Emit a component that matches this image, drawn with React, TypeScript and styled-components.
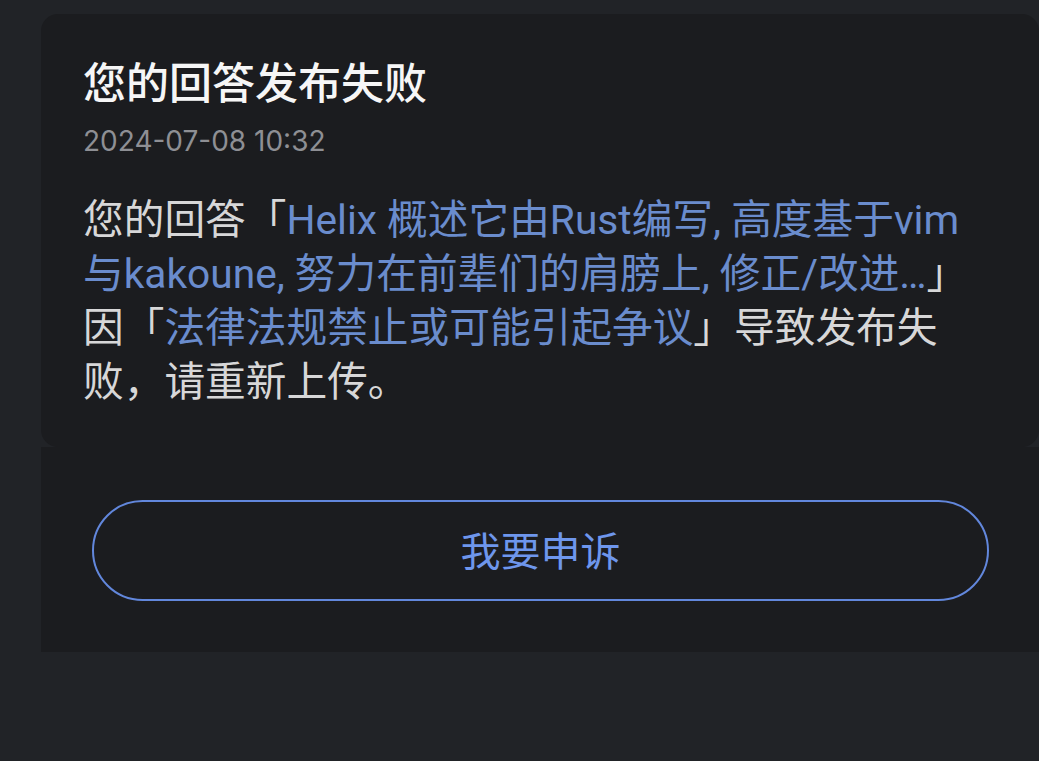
import styled, { createGlobalStyle } from "styled-components";

const GlobalStyle = createGlobalStyle`
	html,
	body {
		margin: 0;
		padding: 0;
		background: #212327;
	}

	body {
		font-family: "Roboto", "Noto Sans CJK SC", sans-serif;
		-webkit-font-smoothing: antialiased;
	}
`;

const Page = styled.main`
	min-height: 761px;
	padding: 14px 0 0 41px;
	box-sizing: border-box;
	background: #212327;
`;

const Sheet = styled.div`
	width: 998px;
	display: flex;
	flex-direction: column;
`;

const Card = styled.section`
	background: #1b1c1f;
	border-radius: 17px;
	padding: 38px 42px 38px;
	display: flex;
	flex-direction: column;
`;

const Title = styled.h1`
	margin: 0;
	font-family: "Noto Sans CJK SC", sans-serif;
	font-weight: 500;
	font-size: 43px;
	line-height: 56px;
	color: #f6f6f6;
`;

const Time = styled.p`
	margin: 13px 0 0;
	font-family: "Inter", "Roboto", sans-serif;
	font-size: 28px;
	line-height: 40px;
	color: #8e8f94;
`;

const Message = styled.p`
	margin: 32px 0 0;
	font-size: 40.7px;
	line-height: 54px;
	white-space: nowrap;
	color: #d7d7d8;
`;

const Quote = styled.span`
	color: #6a8ccd;
`;

const Footer = styled.div`
	background: #1b1c1f;
	padding: 53px 50px 51px 51px;
`;

const AppealButton = styled.button`
	width: 100%;
	height: 101px;
	padding: 0 0 4px;
	border: 2px solid #6287dc;
	border-radius: 51px;
	background: transparent;
	color: #6e96ec;
	font-family: "Noto Sans CJK SC", sans-serif;
	font-size: 40px;
	font-weight: 400;
	cursor: pointer;
`;

export default function App() {
	return (
		<>
			<GlobalStyle />
			<Page>
				<Sheet>
					<Card>
						<Title>您的回答发布失败</Title>
						<Time>2024-07-08 10:32</Time>
						<Message>
							您的回答「<Quote>Helix 概述它由Rust编写, 高度基于vim</Quote>
							<br />
							<Quote>与kakoune, 努力在前辈们的肩膀上, 修正/改进…</Quote>」
							<br />
							因「<Quote>法律法规禁止或可能引起争议</Quote>」导致发布失
							<br />
							败，请重新上传。
						</Message>
					</Card>
					<Footer>
						<AppealButton>我要申诉</AppealButton>
					</Footer>
				</Sheet>
			</Page>
		</>
	);
}
